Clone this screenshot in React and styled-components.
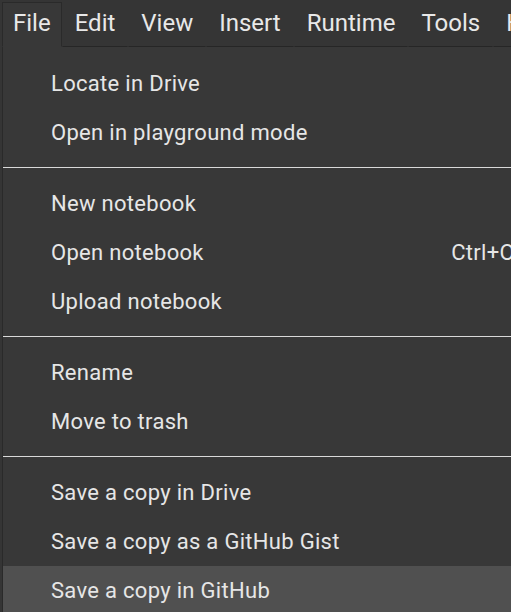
import React from "react";
import styled, { createGlobalStyle } from "styled-components";

const Global = createGlobalStyle`
  html, body {
    margin: 0;
    padding: 0;
    background: #353535;
    overflow: hidden;
    width: 511px;
    height: 612px;
  }
  * { box-sizing: border-box; }
  #root {
    font-family: Roboto, "Noto Sans", "Liberation Sans", sans-serif;
    color: #e6e6e6;
  }
`;

const Page = styled.div`
  width: 511px;
  height: 612px;
  overflow: hidden;
  padding-left: 2px;
  background: #353535;
`;

const MenuBar = styled.div`
  display: flex;
  align-items: flex-end;
  height: 47px;
  padding-top: 2px;
  white-space: nowrap;
  width: 700px;
`;

const BarItem = styled.div`
  flex: none;
  height: 45px;
  padding: ${(p) => (p.$active ? "0 10px" : "0 12px")};
  font-size: 24px;
  line-height: 40px;
  color: #e8e8e8;
  background: ${(p) => (p.$active ? "#383838" : "transparent")};
  border-top: 1px solid ${(p) => (p.$active ? "#2a2a2a" : "transparent")};
  border-left: 1px solid ${(p) => (p.$active ? "#2a2a2a" : "transparent")};
  border-right: 1px solid ${(p) => (p.$active ? "#2a2a2a" : "transparent")};
  border-bottom: 1px solid ${(p) => (p.$active ? "#383838" : "#262626")};
`;

const Filler = styled.div`
  flex: 1;
  height: 45px;
  border-bottom: 1px solid #262626;
`;

const Panel = styled.div`
  width: 537px;
  background: #383838;
  border-left: 1px solid #2a2a2a;
  padding: 12px 24px 0 0;
`;

const Row = styled.div`
  display: grid;
  grid-template-columns: 1fr auto;
  height: 49px;
  padding-left: 48px;
  font-size: 22px;
  letter-spacing: 0.3px;
  line-height: 49px;
  color: #e6e6e6;
  background: ${(p) => (p.$highlighted ? "#505050" : "transparent")};
  margin-right: -24px;
  padding-right: 24px;
  white-space: nowrap;
`;

const Shortcut = styled.span`
  color: #e6e6e6;
`;

const Separator = styled.div`
  height: 1px;
  background: #d9d9d9;
  margin: 10px -24px 11px 0;
`;

const barItems = ["File", "Edit", "View", "Insert", "Runtime", "Tools", "Help"];

const groups = [
  [{ label: "Locate in Drive" }, { label: "Open in playground mode" }],
  [
    { label: "New notebook" },
    { label: "Open notebook", shortcut: "Ctrl+O" },
    { label: "Upload notebook" },
  ],
  [{ label: "Rename" }, { label: "Move to trash" }],
  [
    { label: "Save a copy in Drive" },
    { label: "Save a copy as a GitHub Gist" },
    { label: "Save a copy in GitHub", highlighted: true },
  ],
];

export default function App() {
  return (
    <>
      <Global />
      <Page>
        <MenuBar>
          {barItems.map((name, i) => (
            <BarItem key={name} $active={i === 0}>
              {name}
            </BarItem>
          ))}
          <Filler />
        </MenuBar>
        <Panel>
          {groups.map((group, gi) => (
            <React.Fragment key={gi}>
              {gi > 0 && <Separator />}
              {group.map((item) => (
                <Row key={item.label} $highlighted={item.highlighted}>
                  <span>{item.label}</span>
                  {item.shortcut && <Shortcut>{item.shortcut}</Shortcut>}
                </Row>
              ))}
            </React.Fragment>
          ))}
        </Panel>
      </Page>
    </>
  );
}
